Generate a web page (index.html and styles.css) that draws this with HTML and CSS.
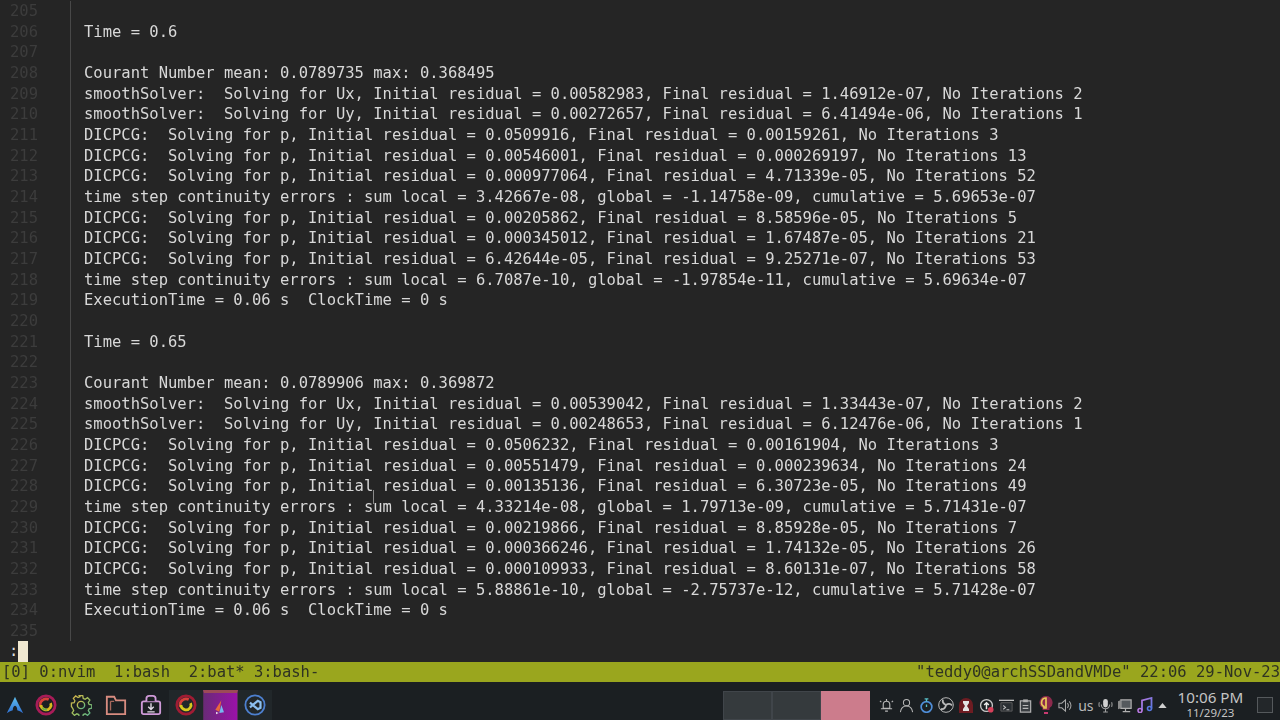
FILE: index.html
```html
<!DOCTYPE html>
<html lang="en">
<head>
<meta charset="utf-8">
<title>tmux</title>
<link rel="stylesheet" href="styles.css">
</head>
<body>
<div class="screen">
<main class="editor">
<div class="row"><span class="num">205</span><span class="line"></span></div>
<div class="row"><span class="num">206</span><span class="line">Time = 0.6</span></div>
<div class="row"><span class="num">207</span><span class="line"></span></div>
<div class="row"><span class="num">208</span><span class="line">Courant Number mean: 0.0789735 max: 0.368495</span></div>
<div class="row"><span class="num">209</span><span class="line">smoothSolver:  Solving for Ux, Initial residual = 0.00582983, Final residual = 1.46912e-07, No Iterations 2</span></div>
<div class="row"><span class="num">210</span><span class="line">smoothSolver:  Solving for Uy, Initial residual = 0.00272657, Final residual = 6.41494e-06, No Iterations 1</span></div>
<div class="row"><span class="num">211</span><span class="line">DICPCG:  Solving for p, Initial residual = 0.0509916, Final residual = 0.00159261, No Iterations 3</span></div>
<div class="row"><span class="num">212</span><span class="line">DICPCG:  Solving for p, Initial residual = 0.00546001, Final residual = 0.000269197, No Iterations 13</span></div>
<div class="row"><span class="num">213</span><span class="line">DICPCG:  Solving for p, Initial residual = 0.000977064, Final residual = 4.71339e-05, No Iterations 52</span></div>
<div class="row"><span class="num">214</span><span class="line">time step continuity errors : sum local = 3.42667e-08, global = -1.14758e-09, cumulative = 5.69653e-07</span></div>
<div class="row"><span class="num">215</span><span class="line">DICPCG:  Solving for p, Initial residual = 0.00205862, Final residual = 8.58596e-05, No Iterations 5</span></div>
<div class="row"><span class="num">216</span><span class="line">DICPCG:  Solving for p, Initial residual = 0.000345012, Final residual = 1.67487e-05, No Iterations 21</span></div>
<div class="row"><span class="num">217</span><span class="line">DICPCG:  Solving for p, Initial residual = 6.42644e-05, Final residual = 9.25271e-07, No Iterations 53</span></div>
<div class="row"><span class="num">218</span><span class="line">time step continuity errors : sum local = 6.7087e-10, global = -1.97854e-11, cumulative = 5.69634e-07</span></div>
<div class="row"><span class="num">219</span><span class="line">ExecutionTime = 0.06 s  ClockTime = 0 s</span></div>
<div class="row"><span class="num">220</span><span class="line"></span></div>
<div class="row"><span class="num">221</span><span class="line">Time = 0.65</span></div>
<div class="row"><span class="num">222</span><span class="line"></span></div>
<div class="row"><span class="num">223</span><span class="line">Courant Number mean: 0.0789906 max: 0.369872</span></div>
<div class="row"><span class="num">224</span><span class="line">smoothSolver:  Solving for Ux, Initial residual = 0.00539042, Final residual = 1.33443e-07, No Iterations 2</span></div>
<div class="row"><span class="num">225</span><span class="line">smoothSolver:  Solving for Uy, Initial residual = 0.00248653, Final residual = 6.12476e-06, No Iterations 1</span></div>
<div class="row"><span class="num">226</span><span class="line">DICPCG:  Solving for p, Initial residual = 0.0506232, Final residual = 0.00161904, No Iterations 3</span></div>
<div class="row"><span class="num">227</span><span class="line">DICPCG:  Solving for p, Initial residual = 0.00551479, Final residual = 0.000239634, No Iterations 24</span></div>
<div class="row"><span class="num">228</span><span class="line">DICPCG:  Solving for p, Initial residual = 0.00135136, Final residual = 6.30723e-05, No Iterations 49</span></div>
<div class="row"><span class="num">229</span><span class="line">time step continuity errors : sum local = 4.33214e-08, global = 1.79713e-09, cumulative = 5.71431e-07</span></div>
<div class="row"><span class="num">230</span><span class="line">DICPCG:  Solving for p, Initial residual = 0.00219866, Final residual = 8.85928e-05, No Iterations 7</span></div>
<div class="row"><span class="num">231</span><span class="line">DICPCG:  Solving for p, Initial residual = 0.000366246, Final residual = 1.74132e-05, No Iterations 26</span></div>
<div class="row"><span class="num">232</span><span class="line">DICPCG:  Solving for p, Initial residual = 0.000109933, Final residual = 8.60131e-07, No Iterations 58</span></div>
<div class="row"><span class="num">233</span><span class="line">time step continuity errors : sum local = 5.88861e-10, global = -2.75737e-12, cumulative = 5.71428e-07</span></div>
<div class="row"><span class="num">234</span><span class="line">ExecutionTime = 0.06 s  ClockTime = 0 s</span></div>
<div class="row"><span class="num">235</span><span class="line"></span></div>
<div class="ibeam"></div>
</main>
<div class="cmdline"><span class="colon">:</span><span class="cursor"></span></div>
<div class="status"><span>[0] 0:nvim  1:bash  2:bat* 3:bash-</span><span>"teddy0@archSSDandVMDe" 22:06 29-Nov-23</span></div>
<footer class="taskbar">
<svg width="0" height="0" class="defs"><defs>
<linearGradient id="archg" x1="0" y1="0" x2="0" y2="1"><stop offset="0" stop-color="#5fc0f0"/><stop offset="1" stop-color="#2f6fd0"/></linearGradient>
<linearGradient id="gearg" x1="0" y1="0" x2="1" y2="1"><stop offset="0" stop-color="#d8b048"/><stop offset=".5" stop-color="#9cc060"/><stop offset="1" stop-color="#50b090"/></linearGradient>
<linearGradient id="musicg" x1="0" y1="0" x2="1" y2="1"><stop offset="0" stop-color="#b878e0"/><stop offset="1" stop-color="#5878e0"/></linearGradient>
</defs></svg>
<div class="launchers">
<div class="slot slot-first"><svg class="ico ico-arch" viewBox="0 0 24 24"><path d="M12 1C11 4 2 21 1 23c3-2 6-3.500 8-4 0-3 1-6 3-6s3 3 3 6c2 .5 5 2 8 4C22 21 13 4 12 1Z" fill="url(#archg)"/></svg></div>
<div class="slot"><svg class="ico" viewBox="0 0 24 24"><circle cx="12" cy="12" r="10" fill="none" stroke="#a81c58" stroke-width="3"/><path d="M6 14a6.500 6.500 0 0 1 9-8" fill="none" stroke="#d8403a" stroke-width="3"/><path d="M6.500 12a5.500 5.500 0 0 0 10 3 5 5 0 0 0 .5-5" fill="none" stroke="#d8b81e" stroke-width="3"/><path d="M8 15a5 5 0 0 0 5 2" fill="none" stroke="#68b048" stroke-width="2"/></svg></div>
<div class="slot"><svg class="ico" viewBox="0 0 24 24"><circle cx="12" cy="12" r="4" fill="none" stroke="url(#gearg)" stroke-width="1.500"/><path d="M10 1.500h4l.6 3.200 2.200.9 2.700-1.800 2.700 2.800-1.800 2.700.9 2.200 3.100.6v3.800l-3.100.6-.9 2.200 1.800 2.700-2.700 2.700-2.700-1.800-2.200.9-.6 3.200h-4l-.6-3.200-2.200-.9-2.700 1.800-2.700-2.700 1.800-2.700-.9-2.200L1 13.900v-3.800l3.100-.6.900-2.200-1.800-2.700 2.700-2.800 2.700 1.800 2.200-.9Z" fill="none" stroke="url(#gearg)" stroke-width="1.500" transform="translate(.6 .4) scale(.95)"/></svg></div>
<div class="slot"><svg class="ico" viewBox="0 0 24 24"><path d="M2 22V3h8l2 4h10v15Z" fill="none" stroke="#d88c80" stroke-width="2"/><path d="M6 8h4M6 8v10" fill="none" stroke="#a8685c" stroke-width="1.500"/></svg></div>
<div class="slot"><svg class="ico" viewBox="0 0 24 24"><rect x="2" y="8" width="20" height="14" rx="2" fill="none" stroke="#cf9ad8" stroke-width="2"/><path d="M7 8V5a3 3 0 0 1 3-3h4a3 3 0 0 1 3 3v3" fill="#1b1f22" stroke="#cf9ad8" stroke-width="2"/><path d="M12 10v7m-3-3 3 3 3-3M8 19.500h8" fill="none" stroke="#e4dce8" stroke-width="1.500"/></svg></div>
</div>
<div class="tasks">
<div class="task"><svg class="ico" viewBox="0 0 24 24"><circle cx="12" cy="12" r="10" fill="none" stroke="#a01c34" stroke-width="3"/><path d="M6 14a6.500 6.500 0 0 1 9-8" fill="none" stroke="#d8403a" stroke-width="3"/><path d="M6.500 12a5.500 5.500 0 0 0 10 3 5 5 0 0 0 .5-5" fill="none" stroke="#d8c81e" stroke-width="3"/></svg></div>
<div class="task task-active"><svg class="ico-small" viewBox="0 0 24 24"><path d="M14 2 5 16l6 3Z" fill="#e8683c"/><path d="M14 9l4 11-7 1Z" fill="#78b8f0"/><path d="M6 19l4 2-4 2Z" fill="#e8d8e8"/></svg></div>
<div class="task"><svg class="ico" viewBox="0 0 24 24"><circle cx="12" cy="12" r="10.500" fill="none" stroke="#4d80d0" stroke-width="2"/><path d="M6.500 9.500 15 16.500l3-1.500V9l-3-1.500-8.500 7" fill="none" stroke="#8cc0f0" stroke-width="2.400"/></svg></div>
</div>
<div class="pager">
<div class="desk"></div>
<div class="desk"></div>
<div class="desk desk-on"></div>
</div>
<div class="tray">
<svg class="tico" viewBox="0 0 16 16"><path d="M4.500 11V7a3.500 3.500 0 0 1 7 0v4ZM2 11.500h12M8 1v2M2.500 4.500 1 3M13.500 4.500 15 3M6.500 14h3" fill="none" stroke="#b8b8b8" stroke-width="1.200"/></svg>
<svg class="tico" viewBox="0 0 16 16"><circle cx="8" cy="5" r="3.300" fill="none" stroke="#b8b8b8" stroke-width="1.100"/><path d="M1.500 15c.5-4 3-6.500 6.500-6.500s6 2.500 6.500 6.500" fill="none" stroke="#b8b8b8" stroke-width="1.100"/></svg>
<svg class="tico" viewBox="0 0 16 16"><circle cx="8" cy="9.500" r="5.700" fill="none" stroke="#4f8ed8" stroke-width="1.800"/><path d="M6 1h4M8 1v3M8 9.500V7" stroke="#58c0c8" stroke-width="1.400"/></svg>
<svg class="tico tico-wide" viewBox="0 0 16 16"><circle cx="8" cy="8" r="7.300" fill="none" stroke="#b8b8b8" stroke-width="1"/><path d="M8 8C6 7 4 5 5 2.500M8 8c2-1.500 4.500-1.500 6 .5M8 8c-.5 2.500-2 4.500-5 4" fill="none" stroke="#b8b8b8" stroke-width="1.800"/></svg>
<svg class="tico tico-wide" viewBox="0 0 16 16"><path d="M1 8a7 7 0 0 1 14 0v8H1Z" fill="#6e1c22"/><path d="M5 4h6v2L9 9l2 3v2H5v-2l2-3-2-3Z" fill="#e4e4e4"/></svg>
<svg class="tico" viewBox="0 0 16 16"><circle cx="8" cy="8" r="6.300" fill="none" stroke="#c8c8c8" stroke-width="1.400"/><path d="M8 12V5M5.500 7.500 8 5l2.500 2.500" fill="none" stroke="#e8e8e8" stroke-width="1.600"/><circle cx="12.500" cy="12.500" r="3" fill="#d8405a"/></svg>
<svg class="tico" viewBox="0 0 16 16"><path d="M0 2.500h16" stroke="#c0c0c0" stroke-width="1.400"/><path d="M2 5h12v9H2Z" fill="#2a2f33" stroke="#6a6a6a" stroke-width=".8"/><path d="M4.500 8 7 10l-2.500 2M8 12.500h3" fill="none" stroke="#b8b8b8" stroke-width="1.100"/></svg>
<svg class="tico" viewBox="0 0 16 16"><path d="M2.500 3h11v12h-11Z" fill="#3a3e42" stroke="#b0b0b0" stroke-width="1.300"/><path d="M5.500 1.500h5v3h-5Z" fill="#b0b0b0"/><path d="M5 8h6M5 11h6" stroke="#b8b8b8" stroke-width="1.200"/></svg>
<svg class="tico tico-bulb" viewBox="0 0 16 20"><path d="M8 1a6.500 6.500 0 0 0-3.500 12v2h7v-2A6.500 6.500 0 0 0 8 1Z" fill="#8c2a4c"/><path d="M8 3a4.500 4.500 0 0 0-2 8.500v1.500h2V3Z" fill="none" stroke="#e8c858" stroke-width="1.700"/><path d="M6 18h4" stroke="#c83a70" stroke-width="2"/></svg>
<svg class="tico" viewBox="0 0 16 16"><path d="M1 5.500h3L8 2v12l-4-3.500H1ZM10 5.500a3.500 3.500 0 0 1 0 5M12 3.500a6.500 6.500 0 0 1 0 9" fill="none" stroke="#a8a8a8" stroke-width="1.100"/></svg>
<span class="lang">us</span>
<svg class="tico" viewBox="0 0 16 16"><rect x="5.500" y="1" width="5" height="9" rx="2.500" fill="#d0d0d0"/><path d="M3.500 7a4.500 4.500 0 0 0 9 0M8 11.500V15M5.500 15h5M1.500 4.500a7 7 0 0 0 0 5M14.500 4.500a7 7 0 0 1 0 5" fill="none" stroke="#a0a0a0" stroke-width="1.100"/></svg>
<svg class="tico" viewBox="0 0 16 16"><path d="M3 2h11v9H3Z" fill="#555a5e" stroke="#b0b0b0" stroke-width="1.300"/><path d="M5 14.500h8M8 11v3" stroke="#b0b0b0" stroke-width="1.300"/><path d="M0 3.500 3 2v9l-3 1" fill="#8a8a8a"/></svg>
<svg class="tico tico-wide" viewBox="0 0 16 16"><path d="M5 13.500V3.500L14.500 1v10.500" fill="none" stroke="url(#musicg)" stroke-width="1.800"/><circle cx="3" cy="13.500" r="2" fill="none" stroke="#b878e0" stroke-width="1.600"/><circle cx="12.500" cy="11.500" r="2" fill="none" stroke="#5878e0" stroke-width="1.600"/></svg>
<svg class="arrow" viewBox="0 0 10 6"><path d="M5 0 10 6H0Z" fill="#d0d0d0"/></svg>
</div>
<div class="clock"><div class="time">10:06 PM</div><div class="date">11/29/23</div></div>
<div class="showdesk"></div>
</footer>
</div>
</body>
</html>
```
FILE: styles.css
```css
* { box-sizing: border-box; }
html, body { margin: 0; padding: 0; height: 100%; background: #252525; }
.screen { width: 1280px; height: 720px; display: flex; flex-direction: column; overflow: hidden; font-family: "DejaVu Sans Mono", monospace; }
.editor { position: relative; height: 641px; flex: none; overflow: hidden; padding-top: 1px; }
.row { display: flex; height: 20.68px; line-height: 20.68px; font-size: 15.5px; white-space: pre; }
.num { width: 71px; flex: none; padding-left: 10px; color: #3c3c3c; border-right: 1px solid #484848; filter: blur(.7px); }
.line { padding-left: 13px; color: #d8d8d8; filter: blur(.25px); }
.ibeam { position: absolute; left: 373px; top: 490px; width: 3px; height: 14px; border-left: 1px solid #8a8a8a; }
.cmdline { height: 21px; flex: none; display: flex; font-size: 15.5px; line-height: 21px; color: #dcdcdc; padding-left: 9px; }
.colon { width: 9px; }
.cursor { width: 10px; height: 21px; background: #f0e8d0; }
.status { height: 20px; flex: none; display: flex; justify-content: space-between; padding: 0 0 0 2px; background: #9aa61e; color: #2f3322; font-size: 15.5px; line-height: 20px; white-space: pre; }
.status span { filter: blur(.25px); }
.taskbar { height: 38px; flex: none; display: flex; align-items: flex-end; background: #1b1f22; position: relative; }
.defs { position: absolute; }
.launchers { display: flex; height: 30px; align-items: center; }
.slot { width: 35px; display: flex; justify-content: center; }
.slot-first { width: 28.5px; padding-left: 2px; }
.ico { width: 22px; height: 22px; display: block; filter: blur(.35px); }
.ico-arch { width: 18px; height: 18px; }
.ico-small { width: 16px; height: 16px; display: block; filter: blur(.5px); }
.tasks { display: flex; height: 30px; background: #21272a; }
.task { width: 34.5px; display: flex; align-items: center; justify-content: center; }
.task-active { background: linear-gradient(90deg, #6a2a78, #9a12a8); border-top: 3px solid #9c4a58; border-left: 1px solid #5c2a60; border-right: 1px solid #5c2a60; }
.pager { display: flex; margin-left: 451px; height: 29px; }
.desk { width: 49px; background: #353a3d; border: 1px solid #40454a; }
.desk-on { background: #cc7c8c; border-color: #cc7c8c; }
.tray { display: flex; align-items: center; gap: 4.93px; margin-left: 9px; height: 30px; }
.tico { width: 15px; height: 15px; display: block; flex: none; filter: blur(.3px); }
.tico-wide { width: 16px; height: 16px; margin: 0 -.5px; }
.tico-bulb { width: 16px; height: 20px; margin: 0 -.5px; }
.lang { font-family: "Noto Sans", sans-serif; font-size: 14px; color: #b8b8b8; width: 15px; text-align: center; }
.arrow { width: 9px; height: 5px; display: block; }
.clock { width: 86px; padding-left: 1px; text-align: center; font-family: "Noto Sans", sans-serif; color: #c4c4c4; height: 30px; white-space: nowrap; }
.time { font-size: 15.2px; line-height: 15px; }
.date { font-size: 11.5px; line-height: 15px; }
.showdesk { width: 16px; height: 16px; margin: 0 0 7px 4.5px; border: 1px solid #55595c; background: #23272a; }
```
